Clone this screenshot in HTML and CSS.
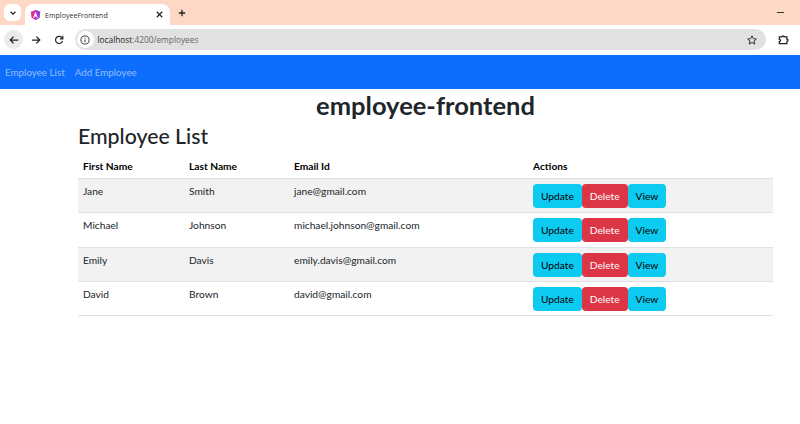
FILE: index.html
```html
<!DOCTYPE html>
<html lang="en">
<head>
    <meta charset="UTF-8">
    <meta name="viewport" content="width=device-width, initial-scale=1.0">
    <title>EmployeeFrontend</title>
    <link rel="stylesheet" href="styles.css">
</head>
<body>
    <div class="tabstrip">
        <div class="tab-search">
            <svg width="8" height="8" viewBox="0 0 10 10"><path d="M2 3.5 5 6.5 8 3.5" fill="none" stroke="#222" stroke-width="1.6"/></svg>
        </div>
        <div class="tab">
            <svg class="favicon" width="11" height="12" viewBox="0 0 14 14">
                <path d="M7 .5 13 2.8 12 10.5 7 13.5 2 10.5 1 2.8Z" fill="#e0329f"/>
                <path d="M7 .5 13 2.8 12 10.5 7 13.5Z" fill="#9a3bd6"/>
                <path d="M7 3 10 10.5H8.6L8 9H6L5.4 10.5H4Z" fill="#fff"/>
            </svg>
            <span class="tab-title">EmployeeFrontend</span>
            <svg class="tab-close" width="7" height="7" viewBox="0 0 9 9"><path d="M1 1 8 8M8 1 1 8" stroke="#222" stroke-width="1.5"/></svg>
        </div>
        <svg class="new-tab" width="8" height="8" viewBox="0 0 10 10"><path d="M5 1V9M1 5H9" stroke="#222" stroke-width="1.6"/></svg>
        <div class="minimize"></div>
    </div>
    <div class="toolbar">
        <div class="tool tool-back">
            <svg width="10" height="10" viewBox="0 0 12 12"><path d="M11 6H1.5M5.5 2 1.5 6 5.5 10" fill="none" stroke="#222" stroke-width="1.5"/></svg>
        </div>
        <div class="tool">
            <svg width="10" height="10" viewBox="0 0 12 12"><path d="M1 6H10.5M6.5 2 10.5 6 6.5 10" fill="none" stroke="#222" stroke-width="1.5"/></svg>
        </div>
        <div class="tool">
            <svg width="10" height="10" viewBox="0 0 12 12"><path d="M10 4A4.3 4.3 0 1 0 10.3 7" fill="none" stroke="#222" stroke-width="1.4"/><path d="M10.6 1V4.6H7" fill="none" stroke="#222" stroke-width="1.4"/></svg>
        </div>
        <div class="omnibox">
            <div class="site-info">
                <svg width="10" height="10" viewBox="0 0 11 11"><circle cx="5.5" cy="5.5" r="4.5" fill="none" stroke="#333" stroke-width="1"/><path d="M5.5 5V8M5.5 3V4" stroke="#333" stroke-width="1.1"/></svg>
            </div>
            <span class="url"><span class="host">localhost</span>:4200/employees</span>
            <svg class="star" width="10" height="10" viewBox="0 0 12 12"><path d="M6 1 7.5 4.4 11.2 4.8 8.4 7.2 9.2 10.9 6 9 2.8 10.9 3.6 7.2.8 4.8 4.5 4.4Z" fill="none" stroke="#333" stroke-width="1.2"/></svg>
        </div>
        <svg class="extensions" width="11" height="11" viewBox="0 0 13 13"><path d="M1.5 3.5H4.5A1.4 1.4 0 0 1 7.3 3.5H10.5V6A1.4 1.4 0 0 1 10.5 8.8V11.5H1.5V9A1.4 1.4 0 0 0 1.5 6Z" fill="none" stroke="#222" stroke-width="1.5"/></svg>
    </div>

    <nav class="navbar">
        <a href="#">Employee List</a>
        <a href="#">Add Employee</a>
    </nav>

    <div class="container">
        <h1>employee-frontend</h1>
        <h2>Employee List</h2>
        <table>
            <thead>
                <tr>
                    <th class="col-first">First Name</th>
                    <th class="col-last">Last Name</th>
                    <th class="col-email">Email Id</th>
                    <th>Actions</th>
                </tr>
            </thead>
            <tbody>
                <tr>
                    <td>Jane</td>
                    <td>Smith</td>
                    <td>jane@gmail.com</td>
                    <td><button class="btn btn-info">Update</button><button class="btn btn-danger">Delete</button><button class="btn btn-info">View</button></td>
                </tr>
                <tr>
                    <td>Michael</td>
                    <td>Johnson</td>
                    <td>michael.johnson@gmail.com</td>
                    <td><button class="btn btn-info">Update</button><button class="btn btn-danger">Delete</button><button class="btn btn-info">View</button></td>
                </tr>
                <tr>
                    <td>Emily</td>
                    <td>Davis</td>
                    <td>emily.davis@gmail.com</td>
                    <td><button class="btn btn-info">Update</button><button class="btn btn-danger">Delete</button><button class="btn btn-info">View</button></td>
                </tr>
                <tr>
                    <td>David</td>
                    <td>Brown</td>
                    <td>david@gmail.com</td>
                    <td><button class="btn btn-info">Update</button><button class="btn btn-danger">Delete</button><button class="btn btn-info">View</button></td>
                </tr>
            </tbody>
        </table>
    </div>
</body>
</html>
```

FILE: styles.css
```css
body {
    font-family: Lato, "Open Sans", sans-serif;
    margin: 0;
    padding: 0;
    background-color: #ffffff;
    color: #212529;
    height: 424px;
    overflow: hidden;
}
.tabstrip {
    display: flex;
    align-items: flex-end;
    height: 25px;
    background-color: #fdd9c5;
    position: relative;
}
.tab-search {
    width: 17px;
    height: 17px;
    margin: 0 4px 4px 4px;
    background-color: #ffffff;
    border-radius: 6px;
    display: flex;
    align-items: center;
    justify-content: center;
}
.tab {
    display: flex;
    align-items: center;
    width: 145px;
    height: 21px;
    padding: 0 7px 0 5px;
    box-sizing: border-box;
    background-color: #ffffff;
    border-radius: 8px 8px 0 0;
}
.favicon {
    margin-right: 4px;
}
.tab-title {
    flex: 1;
    font-family: "Open Sans", sans-serif;
    font-size: 7.1px;
    color: #333333;
    white-space: nowrap;
}
.new-tab {
    margin: 0 0 8px 8px;
}
.minimize {
    position: absolute;
    right: 16px;
    top: 12px;
    width: 7px;
    height: 1px;
    background-color: #333333;
}
.toolbar {
    display: flex;
    align-items: center;
    height: 29px;
    background-color: #ffffff;
    padding-left: 4px;
    box-sizing: border-box;
}
.tool {
    width: 19px;
    height: 19px;
    margin-right: 3.5px;
    border-radius: 50%;
    display: flex;
    align-items: center;
    justify-content: center;
}
.tool-back {
    background-color: #ebebeb;
}
.omnibox {
    display: flex;
    align-items: center;
    width: 691px;
    height: 21px;
    margin-left: 3px;
    background-color: #e1e1e1;
    border-radius: 11px;
    padding: 0 9px 0 2px;
    box-sizing: border-box;
}
.site-info {
    width: 17px;
    height: 17px;
    background-color: #ffffff;
    border-radius: 50%;
    display: flex;
    align-items: center;
    justify-content: center;
    margin-right: 4px;
}
.url {
    flex: 1;
    font-family: "Open Sans", sans-serif;
    font-size: 8.3px;
    color: #666666;
}
.host {
    color: #222222;
}
.extensions {
    margin-left: 12px;
}
.navbar {
    display: flex;
    gap: 10px;
    align-items: center;
    height: 34px;
    margin-top: 1px;
    padding-left: 5px;
    background-color: #0d6efd;
}
.navbar a {
    font-size: 9.8px;
    color: rgba(255, 255, 255, 0.55);
    text-decoration: none;
}
.container {
    margin-left: 78px;
    width: 695px;
}
h1 {
    margin: 0;
    font-size: 25.5px;
    font-weight: 700;
    line-height: 32px;
    text-align: center;
}
h2 {
    margin: 0;
    font-size: 21.3px;
    font-weight: 500;
    line-height: 31px;
}
table {
    width: 100%;
    border-collapse: collapse;
    table-layout: fixed;
    font-size: 10.2px;
    line-height: 15px;
}
th, td {
    padding: 5px;
    text-align: left;
    vertical-align: top;
    color: #212529;
}
th {
    height: 15px;
    padding-top: 7px;
    padding-bottom: 4px;
    font-weight: 700;
    border-bottom: 1px solid #dee2e6;
    color: #000000;
}
td {
    height: 24px;
    padding-bottom: 4.3px;
    border-bottom: 1px solid #dee2e6;
}
tbody tr:nth-child(odd) td {
    background-color: #f2f2f2;
}
.col-first {
    width: 96px;
}
.col-last {
    width: 95px;
}
.col-email {
    width: 229px;
}
.btn {
    font-family: inherit;
    font-size: 10.2px;
    height: 24px;
    padding: 0 7px;
    border: 1px solid transparent;
    border-radius: 4px;
    vertical-align: top;
}
.btn-info {
    background-color: #0dcaf0;
    color: #000000;
}
.btn-danger {
    background-color: #dc3545;
    color: #ffffff;
}
```
